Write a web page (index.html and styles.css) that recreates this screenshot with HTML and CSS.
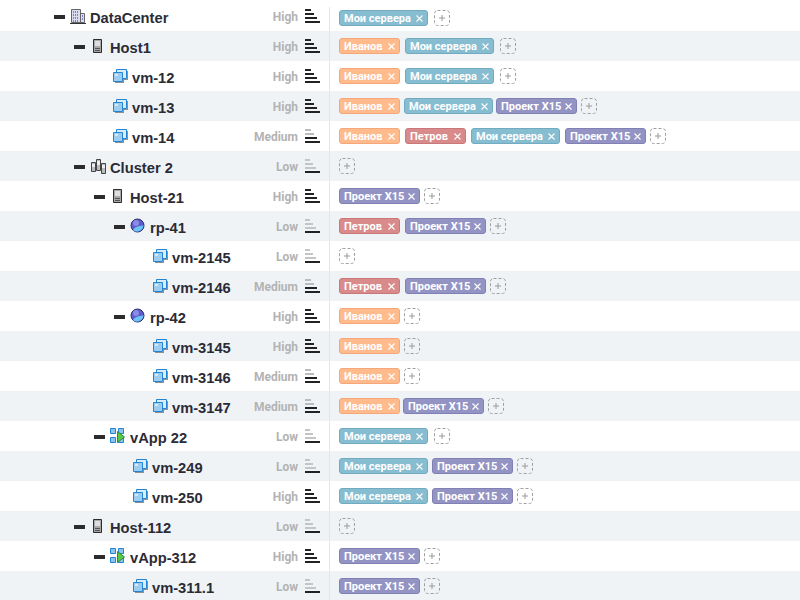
FILE: index.html
```html
<!DOCTYPE html>
<html lang="ru">
<head>
<meta charset="utf-8">
<title>Tree</title>
<link rel="stylesheet" href="styles.css">
</head>
<body>
<svg class="defs" aria-hidden="true">
  <symbol id="x" viewBox="0 0 7 7"><path d="M.5.5l6 6M6.500.5l-6 6" stroke="#fff" stroke-width="1.100" fill="none"/></symbol>
  <symbol id="high" viewBox="0 0 15 14"><path fill="#222" d="M0 0h6v2H0zM0 4h9v2H0zM0 8h12v2H0zM0 12h15v2H0z"/></symbol>
  <symbol id="medium" viewBox="0 0 15 14"><path fill="#bbb" d="M0 0h6v2H0zM0 4h9v2H0z"/><path fill="#222" d="M0 8h12v2H0zM0 12h15v2H0z"/></symbol>
  <symbol id="low" viewBox="0 0 15 14"><path fill="#c4c4c4" d="M0 0h5v2H0zM0 4h8v2H0zM0 8h11v2H0z"/><path fill="#222" d="M0 12h15v2H0z"/></symbol>
  <symbol id="vm" viewBox="0 0 16 16"><path fill="#8c9094" d="M14 3h1v8h-1zM10 11h5v1h-5zM2 14h9v1H2zM10 12h1v3h-1z"/><path fill="#d8ecfa" stroke="#2484d4" d="M3.500 1.500h10v9h-10z"/><path fill="#9ccdf0" stroke="#2484d4" d="M.5 4.500h9v9h-9z"/><path fill="#d2e9f9" d="M2 6h3v2H2z"/></symbol>
  <symbol id="server" viewBox="0 0 16 16"><path fill="#a8a8a8" stroke="#2c2c2c" d="M3.500 1.500h8v13h-8z"/><path fill="#dedede" d="M5 3h5v5H5z"/><path fill="#555" d="M5 10h5v1H5zM5 12h5v1H5z"/></symbol>
  <symbol id="dc" viewBox="0 0 16 16"><path fill="#dcdcf0" stroke="#666" d="M1.500 1.500h9v13h-9zM10.500 5.500h4v9h-4z"/><path fill="#8080d8" d="M3 3h1v2H3zM5 3h1v2H5zM7 3h1v2H7zM3 6h1v2H3zM5 6h1v2H5zM7 6h1v2H7zM3 9h1v2H3zM5 9h1v2H5zM7 9h1v2H7zM3 12h1v2H3zM5 12h1v2H5zM7 12h1v2H7zM12 7h1v2h-1zM12 10h1v2h-1z"/><path fill="#333" d="M0 15h16v1H0z"/></symbol>
  <symbol id="cluster" viewBox="0 0 16 16"><path fill="#bdbdbd" stroke="#444" d="M1.500 4.500h4v9h-4zM6.500 1.500h4v11h-4zM11.500 5.500h4v10h-4z"/><path fill="#efefef" d="M2 6h3v3H2zM7 3h3v4H7zM12 7h3v3h-3z"/></symbol>
  <symbol id="rp" viewBox="0 0 16 16"><circle cx="7.500" cy="7.500" r="6.500" fill="#5c5ccc" stroke="#2c2c70"/><circle cx="6" cy="5" r="3" fill="#8c8ce4"/><path fill="#6cc4f4" d="M3 12c2-3.500 5.500-4 10.500-4.500C13 11 10.500 13.500 7 13.500c-1.500 0-3-.5-4-1.500z"/></symbol>
  <symbol id="vapp" viewBox="0 0 16 16"><path fill="#8cc4ec" stroke="#2484d4" d="M.5.5h5v5h-5zM8.500.5h5v5h-5zM.5 9.500h5v5h-5zM8.500 9.500h5v5h-5z"/><path fill="#58c84c" stroke="#2c8c2c" d="M7.500 3.500l7 5.500-7 5.500z"/></symbol>
  <symbol id="plus" viewBox="0 0 16 16"><rect x=".5" y=".5" width="15" height="15" rx="3" fill="none" stroke="#a0a0a0" stroke-dasharray="3 2"/><path stroke="#999" d="M8 5v6M5 8h6"/></symbol>
</svg>
<div class="tree">

  <div class="row first">
    <div class="name l0"><span class="toggle"></span><svg class="ico"><use href="#dc"/></svg><span class="label">DataCenter</span></div>
    <div class="prio">High</div><svg class="bars"><use href="#high"/></svg>
    <div class="tags">
      <span class="tag blue">Мои сервера<svg class="close"><use href="#x"/></svg></span>
      <svg class="add"><use href="#plus"/></svg>
    </div>
  </div>

  <div class="row">
    <div class="name l1"><span class="toggle"></span><svg class="ico"><use href="#server"/></svg><span class="label">Host1</span></div>
    <div class="prio">High</div><svg class="bars"><use href="#high"/></svg>
    <div class="tags">
      <span class="tag orange">Иванов<svg class="close"><use href="#x"/></svg></span>
      <span class="tag blue">Мои сервера<svg class="close"><use href="#x"/></svg></span>
      <svg class="add"><use href="#plus"/></svg>
    </div>
  </div>

  <div class="row">
    <div class="name l2 leaf"><span class="toggle"></span><svg class="ico"><use href="#vm"/></svg><span class="label">vm-12</span></div>
    <div class="prio">High</div><svg class="bars"><use href="#high"/></svg>
    <div class="tags">
      <span class="tag orange">Иванов<svg class="close"><use href="#x"/></svg></span>
      <span class="tag blue">Мои сервера<svg class="close"><use href="#x"/></svg></span>
      <svg class="add"><use href="#plus"/></svg>
    </div>
  </div>

  <div class="row">
    <div class="name l2 leaf"><span class="toggle"></span><svg class="ico"><use href="#vm"/></svg><span class="label">vm-13</span></div>
    <div class="prio">High</div><svg class="bars"><use href="#high"/></svg>
    <div class="tags">
      <span class="tag orange">Иванов<svg class="close"><use href="#x"/></svg></span>
      <span class="tag blue nudge1">Мои сервера<svg class="close"><use href="#x"/></svg></span>
      <span class="tag purple nudge2">Проект X15<svg class="close"><use href="#x"/></svg></span>
      <svg class="add"><use href="#plus"/></svg>
    </div>
  </div>

  <div class="row">
    <div class="name l2 leaf"><span class="toggle"></span><svg class="ico"><use href="#vm"/></svg><span class="label">vm-14</span></div>
    <div class="prio">Medium</div><svg class="bars"><use href="#medium"/></svg>
    <div class="tags">
      <span class="tag orange">Иванов<svg class="close"><use href="#x"/></svg></span>
      <span class="tag red">Петров<svg class="close"><use href="#x"/></svg></span>
      <span class="tag blue">Мои сервера<svg class="close"><use href="#x"/></svg></span>
      <span class="tag purple">Проект X15<svg class="close"><use href="#x"/></svg></span>
      <svg class="add"><use href="#plus"/></svg>
    </div>
  </div>

  <div class="row">
    <div class="name l1"><span class="toggle"></span><svg class="ico"><use href="#cluster"/></svg><span class="label">Cluster 2</span></div>
    <div class="prio">Low</div><svg class="bars"><use href="#low"/></svg>
    <div class="tags">
      <svg class="add"><use href="#plus"/></svg>
    </div>
  </div>

  <div class="row">
    <div class="name l2"><span class="toggle"></span><svg class="ico"><use href="#server"/></svg><span class="label">Host-21</span></div>
    <div class="prio">High</div><svg class="bars"><use href="#high"/></svg>
    <div class="tags">
      <span class="tag purple">Проект X15<svg class="close"><use href="#x"/></svg></span>
      <svg class="add"><use href="#plus"/></svg>
    </div>
  </div>

  <div class="row">
    <div class="name l3"><span class="toggle"></span><svg class="ico"><use href="#rp"/></svg><span class="label">rp-41</span></div>
    <div class="prio">Low</div><svg class="bars"><use href="#low"/></svg>
    <div class="tags">
      <span class="tag red">Петров<svg class="close"><use href="#x"/></svg></span>
      <span class="tag purple">Проект X15<svg class="close"><use href="#x"/></svg></span>
      <svg class="add"><use href="#plus"/></svg>
    </div>
  </div>

  <div class="row">
    <div class="name l4 leaf"><span class="toggle"></span><svg class="ico"><use href="#vm"/></svg><span class="label">vm-2145</span></div>
    <div class="prio">Low</div><svg class="bars"><use href="#low"/></svg>
    <div class="tags">
      <svg class="add"><use href="#plus"/></svg>
    </div>
  </div>

  <div class="row">
    <div class="name l4 leaf"><span class="toggle"></span><svg class="ico"><use href="#vm"/></svg><span class="label">vm-2146</span></div>
    <div class="prio">Medium</div><svg class="bars"><use href="#medium"/></svg>
    <div class="tags">
      <span class="tag red">Петров<svg class="close"><use href="#x"/></svg></span>
      <span class="tag purple">Проект X15<svg class="close"><use href="#x"/></svg></span>
      <svg class="add"><use href="#plus"/></svg>
    </div>
  </div>

  <div class="row">
    <div class="name l3"><span class="toggle"></span><svg class="ico"><use href="#rp"/></svg><span class="label">rp-42</span></div>
    <div class="prio">High</div><svg class="bars"><use href="#high"/></svg>
    <div class="tags">
      <span class="tag orange">Иванов<svg class="close"><use href="#x"/></svg></span>
      <svg class="add"><use href="#plus"/></svg>
    </div>
  </div>

  <div class="row">
    <div class="name l4 leaf"><span class="toggle"></span><svg class="ico"><use href="#vm"/></svg><span class="label">vm-3145</span></div>
    <div class="prio">High</div><svg class="bars"><use href="#high"/></svg>
    <div class="tags">
      <span class="tag orange">Иванов<svg class="close"><use href="#x"/></svg></span>
      <svg class="add"><use href="#plus"/></svg>
    </div>
  </div>

  <div class="row">
    <div class="name l4 leaf"><span class="toggle"></span><svg class="ico"><use href="#vm"/></svg><span class="label">vm-3146</span></div>
    <div class="prio">Medium</div><svg class="bars"><use href="#medium"/></svg>
    <div class="tags">
      <span class="tag orange">Иванов<svg class="close"><use href="#x"/></svg></span>
      <svg class="add"><use href="#plus"/></svg>
    </div>
  </div>

  <div class="row">
    <div class="name l4 leaf"><span class="toggle"></span><svg class="ico"><use href="#vm"/></svg><span class="label">vm-3147</span></div>
    <div class="prio">Medium</div><svg class="bars"><use href="#medium"/></svg>
    <div class="tags">
      <span class="tag orange">Иванов<svg class="close"><use href="#x"/></svg></span>
      <span class="tag purple nudge2">Проект X15<svg class="close"><use href="#x"/></svg></span>
      <svg class="add"><use href="#plus"/></svg>
    </div>
  </div>

  <div class="row">
    <div class="name l2"><span class="toggle"></span><svg class="ico"><use href="#vapp"/></svg><span class="label">vApp 22</span></div>
    <div class="prio">Low</div><svg class="bars"><use href="#low"/></svg>
    <div class="tags">
      <span class="tag blue">Мои сервера<svg class="close"><use href="#x"/></svg></span>
      <svg class="add"><use href="#plus"/></svg>
    </div>
  </div>

  <div class="row">
    <div class="name l3 leaf"><span class="toggle"></span><svg class="ico"><use href="#vm"/></svg><span class="label">vm-249</span></div>
    <div class="prio">Low</div><svg class="bars"><use href="#low"/></svg>
    <div class="tags">
      <span class="tag blue">Мои сервера<svg class="close"><use href="#x"/></svg></span>
      <span class="tag purple nudge1">Проект X15<svg class="close"><use href="#x"/></svg></span>
      <svg class="add"><use href="#plus"/></svg>
    </div>
  </div>

  <div class="row">
    <div class="name l3 leaf"><span class="toggle"></span><svg class="ico"><use href="#vm"/></svg><span class="label">vm-250</span></div>
    <div class="prio">High</div><svg class="bars"><use href="#high"/></svg>
    <div class="tags">
      <span class="tag blue">Мои сервера<svg class="close"><use href="#x"/></svg></span>
      <span class="tag purple nudge1">Проект X15<svg class="close"><use href="#x"/></svg></span>
      <svg class="add"><use href="#plus"/></svg>
    </div>
  </div>

  <div class="row">
    <div class="name l1"><span class="toggle"></span><svg class="ico"><use href="#server"/></svg><span class="label">Host-112</span></div>
    <div class="prio">Low</div><svg class="bars"><use href="#low"/></svg>
    <div class="tags">
      <svg class="add"><use href="#plus"/></svg>
    </div>
  </div>

  <div class="row">
    <div class="name l2"><span class="toggle"></span><svg class="ico"><use href="#vapp"/></svg><span class="label">vApp-312</span></div>
    <div class="prio">High</div><svg class="bars"><use href="#high"/></svg>
    <div class="tags">
      <span class="tag purple">Проект X15<svg class="close"><use href="#x"/></svg></span>
      <svg class="add"><use href="#plus"/></svg>
    </div>
  </div>

  <div class="row">
    <div class="name l3 leaf"><span class="toggle"></span><svg class="ico"><use href="#vm"/></svg><span class="label">vm-311.1</span></div>
    <div class="prio">Low</div><svg class="bars"><use href="#low"/></svg>
    <div class="tags">
      <span class="tag purple">Проект X15<svg class="close"><use href="#x"/></svg></span>
      <svg class="add"><use href="#plus"/></svg>
    </div>
  </div>

</div>
</body>
</html>
```
FILE: styles.css
```css
html, body {
  margin: 0;
  height: 100%;
  overflow: hidden;
  background: #fff;
}
.defs {
  display: none;
}
.tree {
  padding-top: 1px;
}
.row {
  display: flex;
  height: 30px;
  align-items: flex-start;
}
.row:nth-child(even) {
  background: #eff3f6;
}
.name {
  display: flex;
  align-items: flex-start;
  width: 240px;
  box-sizing: border-box;
  height: 30px;
  font: bold 14.700px/17px "Liberation Sans", Arial, sans-serif;
  color: #2b2b36;
}
.l0 { padding-left: 54px; }
.l1 { padding-left: 74px; }
.l2 { padding-left: 94px; }
.l3 { padding-left: 114px; }
.l4 { padding-left: 134px; }
.toggle {
  flex: none;
  width: 11px;
  height: 4px;
  margin-top: 14px;
  margin-right: 5px;
  background: #2c2c2c;
}
.leaf .toggle {
  visibility: hidden;
}
.ico {
  flex: none;
  width: 16px;
  height: 16px;
  margin-top: 7px;
  margin-right: 4px;
}
.leaf .ico {
  margin-left: 3px;
  margin-right: 3px;
}
.label {
  margin-top: 9px;
}
.prio {
  width: 58px;
  margin-top: 9px;
  text-align: right;
  font: bold 12px/14px Roboto, sans-serif;
  color: #b3b3b3;
}
.bars {
  flex: none;
  width: 15px;
  height: 14px;
  margin-left: 7px;
  margin-top: 8px;
}
.tags {
  display: flex;
  flex: 1;
  gap: 5px;
  box-sizing: border-box;
  height: 30px;
  margin-left: 9px;
  padding: 7px 0 0 9px;
  border-left: 1px solid #e6e6e6;
}
.first .tags {
  height: 24px;
  margin-top: 6px;
  padding-top: 3px;
}
.tag {
  display: flex;
  flex: none;
  align-items: center;
  justify-content: space-between;
  box-sizing: border-box;
  height: 16px;
  padding: 1px 4px 0 4px;
  border: 1px solid;
  border-radius: 3px;
  font: bold 11px/14px Roboto, sans-serif;
  color: #fff;
}
.close {
  flex: none;
  width: 7px;
  height: 7px;
  margin-top: -1px;
}
.blue { width: 89px; background: #86bdd0; border-color: #72abc0; }
.orange { width: 61px; background: #ffbb8c; border-color: #f5a67a; }
.red { width: 61px; background: #d98b8b; border-color: #c87878; }
.purple { width: 81px; background: #9494c4; border-color: #8080b4; }
.nudge1 { margin-left: -1px; }
.nudge2 { margin-left: -2px; }
.add {
  flex: none;
  width: 16px;
  height: 16px;
  margin-left: -1px;
}
.blue + .add { margin-left: 1px; }
.add:first-child { margin-left: 0; }
```
